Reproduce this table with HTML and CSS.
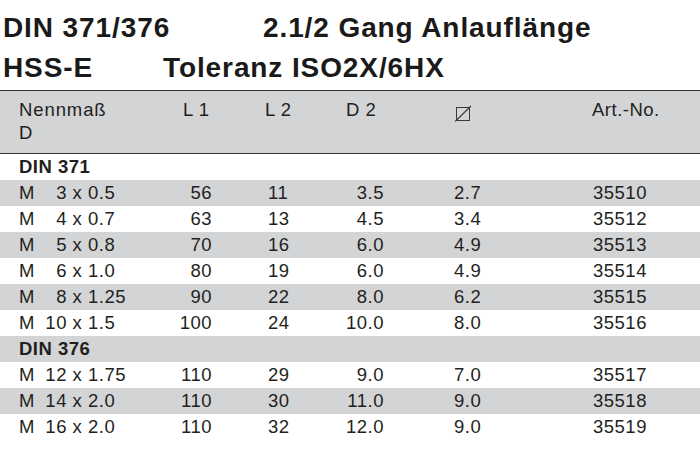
FILE: index.html
```html
<!DOCTYPE html>
<html>
<head>
<meta charset="utf-8">
<link rel="stylesheet" href="styles.css">
</head>
<body>
<div class="title">
  <div class="tline"><span class="t1">DIN 371/376</span><span>2.1/2 Gang Anlauflänge</span></div>
  <div class="tline"><span class="t2">HSS-E</span><span>Toleranz ISO2X/6HX</span></div>
</div>
<div class="table">
  <div class="head">
    <div class="h1">Nennmaß<br>D</div>
    <div class="h2">L 1</div>
    <div class="h3">L 2</div>
    <div class="h4">D 2</div>
    <div class="h5"><svg class="sq" width="18" height="17" viewBox="0 0 18 17"><rect x="2.5" y="2.5" width="13" height="13" fill="none" stroke="#3a3a3a" stroke-width="1"/><line x1="1.2" y1="16.5" x2="17" y2="1" stroke="#3a3a3a" stroke-width="1.1"/></svg></div>
    <div class="h6">Art.-No.</div>
  </div>
  <div class="row sec"><div class="c1 b">DIN 371</div></div>
  <div class="row alt"><div class="c1">M<span class="n">3</span> x 0.5</div><div class="c2">56</div><div class="c3">11</div><div class="c4">3.5</div><div class="c5">2.7</div><div class="c6">35510</div></div>
  <div class="row"><div class="c1">M<span class="n">4</span> x 0.7</div><div class="c2">63</div><div class="c3">13</div><div class="c4">4.5</div><div class="c5">3.4</div><div class="c6">35512</div></div>
  <div class="row alt"><div class="c1">M<span class="n">5</span> x 0.8</div><div class="c2">70</div><div class="c3">16</div><div class="c4">6.0</div><div class="c5">4.9</div><div class="c6">35513</div></div>
  <div class="row"><div class="c1">M<span class="n">6</span> x 1.0</div><div class="c2">80</div><div class="c3">19</div><div class="c4">6.0</div><div class="c5">4.9</div><div class="c6">35514</div></div>
  <div class="row alt"><div class="c1">M<span class="n">8</span> x 1.25</div><div class="c2">90</div><div class="c3">22</div><div class="c4">8.0</div><div class="c5">6.2</div><div class="c6">35515</div></div>
  <div class="row"><div class="c1">M<span class="n">10</span> x 1.5</div><div class="c2">100</div><div class="c3">24</div><div class="c4">10.0</div><div class="c5">8.0</div><div class="c6">35516</div></div>
  <div class="row alt"><div class="c1 b">DIN 376</div></div>
  <div class="row"><div class="c1">M<span class="n">12</span> x 1.75</div><div class="c2">110</div><div class="c3">29</div><div class="c4">9.0</div><div class="c5">7.0</div><div class="c6">35517</div></div>
  <div class="row alt"><div class="c1">M<span class="n">14</span> x 2.0</div><div class="c2">110</div><div class="c3">30</div><div class="c4">11.0</div><div class="c5">9.0</div><div class="c6">35518</div></div>
  <div class="row"><div class="c1">M<span class="n">16</span> x 2.0</div><div class="c2">110</div><div class="c3">32</div><div class="c4">12.0</div><div class="c5">9.0</div><div class="c6">35519</div></div>
</div>
</body>
</html>
```
FILE: styles.css
```css
html, body {
  margin: 0;
  padding: 0;
  background: #fff;
}
body {
  font-family: "Liberation Sans", Arial, sans-serif;
  color: #231f20;
  width: 700px;
  height: 449px;
  overflow: hidden;
}
.title {
  padding-top: 8px;
  padding-left: 3px;
  font-weight: bold;
  font-size: 28px;
  letter-spacing: 0.9px;
  color: #1a1a1a;
  height: 82px;
}
.tline {
  display: flex;
  line-height: 40px;
  white-space: nowrap;
}
.t1 { width: 260px; }
.t2 { width: 160px; }
.table {
  font-size: 18.5px;
  letter-spacing: 0.5px;
}
.head, .row {
  display: grid;
  grid-template-columns: 175px 37px 118px 54px 138px 178px;
  white-space: nowrap;
}
.head {
  background: #d3d4d6;
  border-top: 1.5px solid #333;
  border-bottom: 1.5px solid #333;
  padding: 7px 0 9px;
  line-height: 23px;
  height: 46px;
}
.h1 { padding-left: 19px; letter-spacing: 0.9px; }
.h2 { padding-left: 8px; }
.h3 { padding-left: 53px; }
.h4 { padding-left: 16px; }
.h5 { padding-left: 70px; }
.h6 { padding-left: 70px; }
.sq { vertical-align: -6px; }
.row {
  height: 26px;
  line-height: 26px;
}
.alt { background: #d3d4d6; }
.c1 { padding-left: 19px; }
.c1.b { font-weight: bold; grid-column: 1 / 3; }
.n {
  display: inline-block;
  width: 32px;
  text-align: right;
}
.c2 { text-align: right; }
.c3 { padding-left: 56px; }
.c4 { text-align: right; }
.c5 { padding-left: 70px; }
.c6 { padding-left: 71px; }
```
